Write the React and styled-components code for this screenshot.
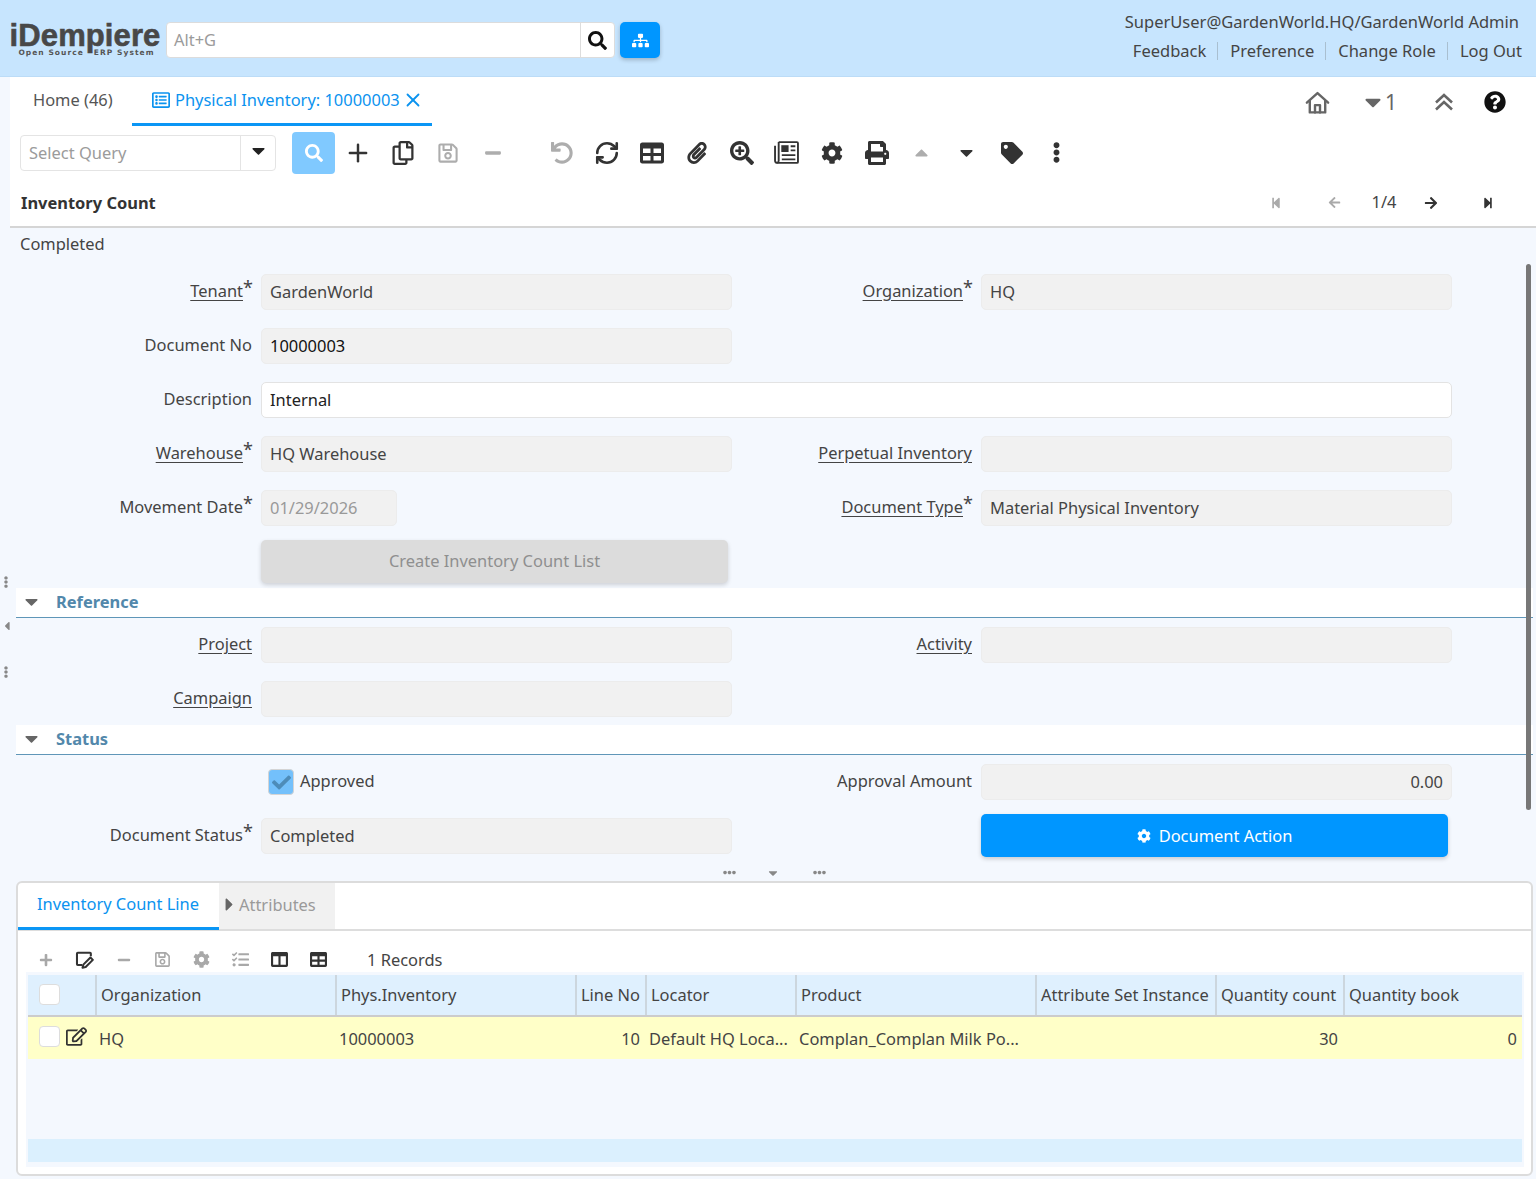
import React from "react";
import styled, { createGlobalStyle } from "styled-components";
import {
  FaSearch, FaSitemap, FaCaretDown, FaCaretUp, FaCaretRight, FaCaretLeft, FaMinus, FaRegCopy, FaRegSave, FaTable, FaPaperclip,
  FaSearchPlus, FaCog, FaPrint, FaTag, FaEllipsisV, FaQuestionCircle, FaStepBackward, FaStepForward,
  FaArrowLeft, FaArrowRight, FaRegListAlt, FaRegEdit, FaColumns, FaTasks, FaUndo, FaEllipsisH, FaCheck, FaPlus,
} from "react-icons/fa";
import { X, Plus, RefreshCw } from "lucide-react";

const Global = createGlobalStyle`
  html, body { margin: 0; padding: 0; height: 1179px; overflow: hidden; background: #f4f8fe; }
  body { font-family: "Noto Sans", sans-serif; font-size: 16.45px; color: #333; }
  * { box-sizing: border-box; }
`;

const Page = styled.div`position: relative; width: 1536px; height: 1179px; overflow: hidden;`;

const Header = styled.header`
  height: 77px; background: #c7e5fe; border-bottom: 1px solid #bcdcf7;
  display: flex; align-items: flex-start; padding: 22px 14px 0 10px;
`;
const Logo = styled.div`width: 150px; margin-top: 1px; display: flex; flex-direction: column; align-items: center; color: #484848; line-height: 1;`;
const LogoName = styled.span`font: bold 31px/26px "Liberation Sans", sans-serif; letter-spacing: .1px; -webkit-text-stroke: .6px #484848;`;
const LogoTag = styled.span`font: bold 7.5px/7px "DejaVu Sans", sans-serif; letter-spacing: 1.05px; white-space: nowrap; color: #555; margin-left: 3px;`;
const LogoGap = styled.i`display: inline-block; width: 10px;`;
const SearchBox = styled.div`
  margin-left: 6px; width: 449px; height: 36px; background: #fff; border: 1px solid #dcdcdc; border-radius: 4px;
  display: flex; align-items: stretch;
`;
const SearchHint = styled.span`flex: 1; padding-left: 7px; line-height: 34px; color: #9b9b9b;`;
const SearchEnd = styled.span`width: 34px; border-left: 1px solid #ddd; display: flex; align-items: center; justify-content: center; color: #111; font-size: 19px;`;
const MenuButton = styled.div`
  margin-left: 5px; width: 40px; height: 36px; background: #0096ff; border-radius: 5px; color: #fff; font-size: 17px;
  display: flex; align-items: center; justify-content: center; box-shadow: 0 2px 4px rgba(0,0,0,.22);
`;
const UserBlock = styled.div`margin-left: auto; margin-top: -12px; display: flex; flex-direction: column; align-items: flex-end; color: #444;`;
const UserLine = styled.div`height: 24px; padding-right: 3px; line-height: 24px; font-size: 16.5px; margin-bottom: 5px;`;
const UserLinks = styled.div`display: flex; height: 24px; align-items: center;`;
const UserLink = styled.span`
  padding: 0 11px 0 12px; line-height: 18px; font-size: 16.5px; border-right: 1px solid #a9bfd0;
  &:last-child { border-right: 0; padding-right: 0; }
`;

const TopArea = styled.div`margin-left: 10px; background: #fff; height: 151px; border-bottom: 2px solid #d5d5d5;`;
const TabBar = styled.div`height: 49px; display: flex; align-items: stretch;`;
const HomeTab = styled.div`width: 122px; padding: 11px 0 0 23px; color: #555; line-height: 24px;`;
const ActiveTab = styled.div`
  width: 300px; border-bottom: 3px solid #0a96f5; color: #0b93ef; padding: 11px 0 0 20px; line-height: 24px;
  display: flex; align-items: flex-start; gap: 5px; height: 49px;
`;
const TabGlyph = styled.span`display: flex; font-size: 18px; margin-top: 3px;`;
const CloseGlyph = styled.span`display: flex; margin: 1px 0 0 -3px;`;
const TabTools = styled.div`margin-left: auto; margin-right: 10px; display: flex; align-items: center; color: #666; padding-top: 1px;`;
const ToolSlot = styled.span`
  width: ${p => p.$w}px; margin-left: ${p => p.$ml || 0}px; display: flex; align-items: center; justify-content: center; font-size: ${p => p.$s || 20}px;
  color: ${p => p.$c || "inherit"};
`;
const Toolbar = styled.div`height: 47px; padding: 6px 0 0 10px; display: flex; align-items: center;`;
const QueryBox = styled.div`
  width: 256px; height: 36px; background: #fff; border: 1px solid #e4e4e4; border-radius: 4px; display: flex; margin-right: 16px;
`;
const QueryHint = styled.span`flex: 1; padding-left: 8px; line-height: 34px; color: #9b9b9b;`;
const QueryEnd = styled.span`width: 35px; border-left: 1px solid #e4e4e4; display: flex; align-items: center; justify-content: center; font-size: 21px; color: #222; padding-bottom: 4px;`;
const ToolSearch = styled.div`
  width: 43px; height: 42px; background: #80c9ff; border-radius: 4px; color: #fff; font-size: 18px;
  display: flex; align-items: center; justify-content: center;
`;
const ToolIcon = styled.span`
  width: 45px; height: 42px; display: flex; align-items: center; justify-content: center;
  font-size: ${p => p.$s || 22}px; color: ${p => (p.$off ? "#adadad" : "#333")}; margin-left: ${p => p.$gap || 0}px;
`;
const TitleRow = styled.div`height: 53px; display: flex; align-items: center; padding: 5px 0 0 11px;`;
const Title = styled.div`font-weight: 700; color: #333;`;
const NavBar = styled.div`margin-left: auto; margin-right: 17px; display: flex; align-items: center; height: 24px; margin-top: 1px;`;
const NavSlot = styled.span`
  width: ${p => p.$w}px; display: flex; justify-content: center; align-items: center; font-size: ${p => p.$s || 13}px;
  color: ${p => (p.$off ? "#aaa" : "#333")};
`;
const NavCount = styled(NavSlot)`margin-top: -2px; color: #444;`;

const FormArea = styled.div`padding-left: 16px; height: 632px; position: relative;`;
const StatusText = styled.div`height: 46px; padding: 5px 0 0 4px; line-height: 22px; color: #444;`;
const Grid = styled.div`
  display: grid; grid-template-columns: 245px 471px 249px 471px; grid-auto-rows: 54px; width: 1436px;
`;
const LabelCell = styled.div`
  display: flex; justify-content: flex-end; align-items: flex-start; padding: 4px 9px 0 0; line-height: 26px; color: #444; white-space: nowrap;
`;
const LabelText = styled.span`
  ${p => (p.$u ? "text-decoration: underline; text-underline-offset: 3px;" : "")}
`;
const Star = styled.span`display: block; font-size: 18px; line-height: 22px; width: 9px; text-align: center; margin-top: -2px;`;
const Field = styled.div`
  height: 36px; background: ${p => (p.$white ? "#fff" : "#f1f1f1")}; border: 1px solid ${p => (p.$white ? "#e3e3e3" : "#ececec")}; border-radius: 5px;
  padding: 0 8px; line-height: 34px; color: ${p => p.$c || "#444"}; text-align: ${p => (p.$right ? "right" : "left")};
  width: ${p => (p.$w ? p.$w + "px" : "auto")}; grid-column: ${p => p.$span || "auto"};
`;
const Blank = styled.div``;
const GrayButton = styled.div`
  grid-column: 2; width: 467px; height: 43px; margin-top: -4px; background: #dcdcdc; border-radius: 5px; color: #8f8f8f; text-align: center; line-height: 42px;
  box-shadow: 0 2px 4px rgba(0,0,0,.16);
`;
const GroupHead = styled.div`
  height: 30px; background: #fff; border-bottom: 1px solid #5f96b8; display: flex; align-items: center; margin-top: -10px;
  font-weight: 700; color: #5288ab; padding-bottom: 3px; margin-bottom: 9px; width: 1517px;
`;
const GroupCaret = styled.span`width: 40px; padding-left: 5px; display: flex; color: #666; font-size: 21px;`;
const CheckCell = styled.div`grid-column: 2; display: flex; align-items: center; gap: 6px; height: 36px; padding-left: 7px; color: #444;`;
const CheckText = styled.span`margin-top: -3px;`;
const BlueCheck = styled.span`
  width: 26px; height: 26px; background: #73c0fb; border: 1px solid #d4d4d4; border-radius: 4px; color: #4d8cb9; display: flex; align-items: center; justify-content: center; font-size: 19px;
`;
const ActionButton = styled.div`
  width: 467px; height: 43px; margin-top: -4px; background: #0096ff; color: #fff; border-radius: 5px; display: flex; align-items: center; justify-content: center; gap: 8px;
  box-shadow: 0 2px 4px rgba(0,0,0,.18);
`;
const Scrollbar = styled.div`position: absolute; left: 1526px; top: 36px; width: 5px; height: 546px; background: #777; border-radius: 3px;`;
const Handle = styled.span`position: absolute; left: 0; top: ${p => p.$t}px; color: #888; font-size: ${p => p.$s || 12}px; display: flex;`;
const SplitHandle = styled.span`position: absolute; left: ${p => p.$l}px; top: 866px; color: #888; font-size: ${p => p.$s || 13}px; display: flex;`;

const Detail = styled.section`
  margin: 21px 0 0 16px; width: 1517px; height: 295px; background: #fff; border: 2px solid #dcdcdc; border-radius: 6px; overflow: hidden;
`;
const DetailTabs = styled.div`display: flex; height: 48px; border-bottom: 2px solid #ddd;`;
const DetailActive = styled.div`width: 201px; height: 47px; color: #0b93ef; border-bottom: 3px solid #0a96f5; padding-left: 19px; line-height: 42px;`;
const DetailOff = styled.div`width: 116px; height: 46px; background: #f1f1f1; color: #9a9a9a; display: flex; align-items: center; padding-bottom: 3px;`;
const OffCaret = styled.span`display: flex; font-size: 21px; color: #666; margin-right: -1px;`;
const DetailTools = styled.div`height: 41px; padding: 16px 0 0 8px; display: flex; align-items: center;`;
const DetailIcon = styled.span`width: 39px; display: flex; justify-content: center; font-size: 17px; color: ${p => (p.$off ? "#a8a8a8" : "#333")};`;
const RecordCount = styled.span`margin-left: 29px; color: #444;`;
const TableWrap = styled.div`margin: 0 0 0 8px; padding: 3px 2px 5px 2px; width: 1498px; height: 195px; background: #f4f8fe; display: flex; flex-direction: column;`;
const COLS = "67px 240px 240px 70px 150px 240px 180px 128px 179px";
const HeadRow = styled.div`display: grid; grid-template-columns: ${COLS}; height: 42px; background: #dff0fe; border-bottom: 2px solid #ccc;`;
const HeadCell = styled.div`
  border-left: ${p => (p.$first ? 0 : "2px solid #ccd6de")}; padding-left: ${p => (p.$first ? 11 : 4)}px; padding-bottom: 2px; color: #444; white-space: nowrap; display: flex; align-items: center; height: 40px;
`;
const BodyRow = styled.div`display: grid; grid-template-columns: ${COLS}; height: 42px; background: #ffffc8; margin-bottom: 80px;`;
const BodyCell = styled.div`
  padding: 1px 5px 0 4px; line-height: 42px; color: #444; white-space: nowrap; overflow: hidden; text-overflow: ellipsis; text-align: ${p => (p.$right ? "right" : "left")};
`;
const RowSelect = styled.div`display: flex; align-items: center; gap: 6px; padding: 0 0 4px 11px; font-size: 21px; color: #333;`;
const Tick = styled.span`width: 21px; height: 21px; background: #fff; border: 1px solid #ddd; border-radius: 4px; display: block; flex: none;`;
const FootBar = styled.div`height: 23px; background: #dbf0fe;`;

const HouseIcon = () => (
  <svg width="25" height="25" viewBox="0 0 24 24" fill="none" stroke="currentColor" strokeWidth="2.3" strokeLinejoin="round" strokeLinecap="round">
    <path d="M1.8 12.2 12 3l10.2 9.2" /><path d="M4.6 10.4V21.5h14.8V10.4" /><path d="M9.6 21.5v-7h4.8v7" />
  </svg>
);
const DoubleUpIcon = () => (
  <svg width="20" height="20" viewBox="0 0 20 20" fill="none" stroke="currentColor" strokeWidth="2.6" strokeLinejoin="miter">
    <path d="M2 10.5 10 3l8 7.5" /><path d="M2 17.5 10 10l8 7.5" />
  </svg>
);
const NewsIcon = () => (
  <svg width="25" height="25" viewBox="0 0 24 24" fill="none" stroke="currentColor" strokeWidth="1.8">
    <path d="M4.5 2h17.5a1 1 0 0 1 1 1v18a1 1 0 0 1-1 1H3a2 2 0 0 1-2-2V5.5" />
    <path d="M4.5 2v18a2 2 0 0 1-1.5 2" />
    <path d="M7 5h7v6.5H7z" fill="currentColor" stroke="none" />
    <path d="M16 6h4.5M16 10h4.5M7.5 14.5h13M7.5 18.5h13" strokeWidth="1.7" />
  </svg>
);
const PenBoxIcon = () => (
  <svg width="19" height="19" viewBox="0 0 24 24" fill="none" stroke="currentColor" strokeWidth="2.6" strokeLinejoin="round">
    <path d="M20 8V4.5a1 1 0 0 0-1-1H3.5a1 1 0 0 0-1 1V18a1 1 0 0 0 1 1H9" />
    <path d="M19.5 9.5l3 3-9 9-4 1 1-4z" />
  </svg>
);

function Label({ text, u, req }) {
  return (
    <LabelCell>
      <LabelText $u={u}>{text}</LabelText>
      {req && <Star>*</Star>}
    </LabelCell>
  );
}

const headers = ["Organization", "Phys.Inventory", "Line No", "Locator", "Product", "Attribute Set Instance", "Quantity count", "Quantity book"];

export default function App() {
  return (
    <Page>
      <Global />
      <Header>
        <Logo>
          <LogoName>iDempiere</LogoName>
          <LogoTag>Open Source<LogoGap />ERP System</LogoTag>
        </Logo>
        <SearchBox>
          <SearchHint>Alt+G</SearchHint>
          <SearchEnd><FaSearch /></SearchEnd>
        </SearchBox>
        <MenuButton><FaSitemap /></MenuButton>
        <UserBlock>
          <UserLine>SuperUser@GardenWorld.HQ/GardenWorld Admin</UserLine>
          <UserLinks>
            <UserLink>Feedback</UserLink>
            <UserLink>Preference</UserLink>
            <UserLink>Change Role</UserLink>
            <UserLink>Log Out</UserLink>
          </UserLinks>
        </UserBlock>
      </Header>

      <TopArea>
        <TabBar>
          <HomeTab>Home (46)</HomeTab>
          <ActiveTab>
            <TabGlyph><FaRegListAlt /></TabGlyph>
            <span>Physical Inventory: 10000003</span>
            <CloseGlyph><X size={22} strokeWidth={2} /></CloseGlyph>
          </ActiveTab>
          <TabTools>
            <ToolSlot $w={64}><HouseIcon /></ToolSlot>
            <ToolSlot $w={24} $ml={12} $s={26}><FaCaretDown /></ToolSlot>
            <ToolSlot $w={12} $s={21}>1</ToolSlot>
            <ToolSlot $w={40} $ml={27}><DoubleUpIcon /></ToolSlot>
            <ToolSlot $w={62} $s={22} $c="#111"><FaQuestionCircle /></ToolSlot>
          </TabTools>
        </TabBar>
        <Toolbar>
          <QueryBox>
            <QueryHint>Select Query</QueryHint>
            <QueryEnd><FaCaretDown /></QueryEnd>
          </QueryBox>
          <ToolSearch><FaSearch /></ToolSearch>
          <ToolIcon><Plus size={28} strokeWidth={2.1} /></ToolIcon>
          <ToolIcon $s={24}><FaRegCopy /></ToolIcon>
          <ToolIcon $off><FaRegSave /></ToolIcon>
          <ToolIcon $off $s={18}><FaMinus /></ToolIcon>
          <ToolIcon $off $gap={24} $s={22}><FaUndo /></ToolIcon>
          <ToolIcon><RefreshCw size={26} strokeWidth={2.4} /></ToolIcon>
          <ToolIcon $s={24}><FaTable /></ToolIcon>
          <ToolIcon><FaPaperclip /></ToolIcon>
          <ToolIcon $s={24}><FaSearchPlus /></ToolIcon>
          <ToolIcon><NewsIcon /></ToolIcon>
          <ToolIcon><FaCog /></ToolIcon>
          <ToolIcon $s={24}><FaPrint /></ToolIcon>
          <ToolIcon $off $s={21}><FaCaretUp /></ToolIcon>
          <ToolIcon $s={21}><FaCaretDown /></ToolIcon>
          <ToolIcon><FaTag /></ToolIcon>
          <ToolIcon $s={21}><FaEllipsisV /></ToolIcon>
        </Toolbar>
        <TitleRow>
          <Title>Inventory Count</Title>
          <NavBar>
            <NavSlot $w={58} $off $s={12}><FaStepBackward /></NavSlot>
            <NavSlot $w={58} $off $s={13}><FaArrowLeft /></NavSlot>
            <NavCount $w={42} $s={16.45}>1/4</NavCount>
            <NavSlot $w={52} $s={14}><FaArrowRight /></NavSlot>
            <NavSlot $w={62} $s={12}><FaStepForward /></NavSlot>
          </NavBar>
        </TitleRow>
      </TopArea>

      <FormArea>
        <StatusText>Completed</StatusText>
        <Grid>
          <Label text="Tenant" u req /><Field>GardenWorld</Field>
          <Label text="Organization" u req /><Field>HQ</Field>
          <Label text="Document No" /><Field $c="#111">10000003</Field><Blank /><Blank />
          <Label text="Description" /><Field $white $c="#222" $span="2 / 5">Internal</Field>
          <Label text="Warehouse" u req /><Field>HQ Warehouse</Field>
          <Label text="Perpetual Inventory" u /><Field />
          <Label text="Movement Date" req /><Field $w={136} $c="#999">01/29/2026</Field>
          <Label text="Document Type" u req /><Field>Material Physical Inventory</Field>
          <Blank /><GrayButton>Create Inventory Count List</GrayButton>
        </Grid>
        <GroupHead><GroupCaret><FaCaretDown /></GroupCaret>Reference</GroupHead>
        <Grid>
          <Label text="Project" u /><Field /><Label text="Activity" u /><Field />
          <Label text="Campaign" u /><Field />
        </Grid>
        <GroupHead><GroupCaret><FaCaretDown /></GroupCaret>Status</GroupHead>
        <Grid>
          <Blank />
          <CheckCell><BlueCheck><FaCheck /></BlueCheck><CheckText>Approved</CheckText></CheckCell>
          <Label text="Approval Amount" /><Field $right>0.00</Field>
          <Label text="Document Status" req /><Field>Completed</Field>
          <Blank />
          <ActionButton><FaCog size={14} />Document Action</ActionButton>
        </Grid>
        <Scrollbar />
      </FormArea>

      <Handle $t={576}><FaEllipsisV /></Handle>
      <Handle $t={619} $s={14}><FaCaretLeft /></Handle>
      <Handle $t={666}><FaEllipsisV /></Handle>
      <SplitHandle $l={723}><FaEllipsisH /></SplitHandle>
      <SplitHandle $l={766} $s={14}><FaCaretDown /></SplitHandle>
      <SplitHandle $l={813}><FaEllipsisH /></SplitHandle>

      <Detail>
        <DetailTabs>
          <DetailActive>Inventory Count Line</DetailActive>
          <DetailOff><OffCaret><FaCaretRight /></OffCaret>Attributes</DetailOff>
        </DetailTabs>
        <DetailTools>
          <DetailIcon $off><FaPlus size={14} /></DetailIcon>
          <DetailIcon><PenBoxIcon /></DetailIcon>
          <DetailIcon $off><FaMinus size={14} /></DetailIcon>
          <DetailIcon $off><FaRegSave /></DetailIcon>
          <DetailIcon $off><FaCog /></DetailIcon>
          <DetailIcon $off><FaTasks /></DetailIcon>
          <DetailIcon><FaColumns /></DetailIcon>
          <DetailIcon><FaTable /></DetailIcon>
          <RecordCount>1 Records</RecordCount>
        </DetailTools>
        <TableWrap>
          <HeadRow>
            <HeadCell $first><Tick /></HeadCell>
            {headers.map(h => <HeadCell key={h}>{h}</HeadCell>)}
          </HeadRow>
          <BodyRow>
            <RowSelect><Tick /><FaRegEdit /></RowSelect>
            <BodyCell>HQ</BodyCell>
            <BodyCell>10000003</BodyCell>
            <BodyCell $right>10</BodyCell>
            <BodyCell>Default HQ Loca...</BodyCell>
            <BodyCell>Complan_Complan Milk Po...</BodyCell>
            <BodyCell />
            <BodyCell $right>30</BodyCell>
            <BodyCell $right>0</BodyCell>
          </BodyRow>
          <FootBar />
        </TableWrap>
      </Detail>
    </Page>
  );
}
